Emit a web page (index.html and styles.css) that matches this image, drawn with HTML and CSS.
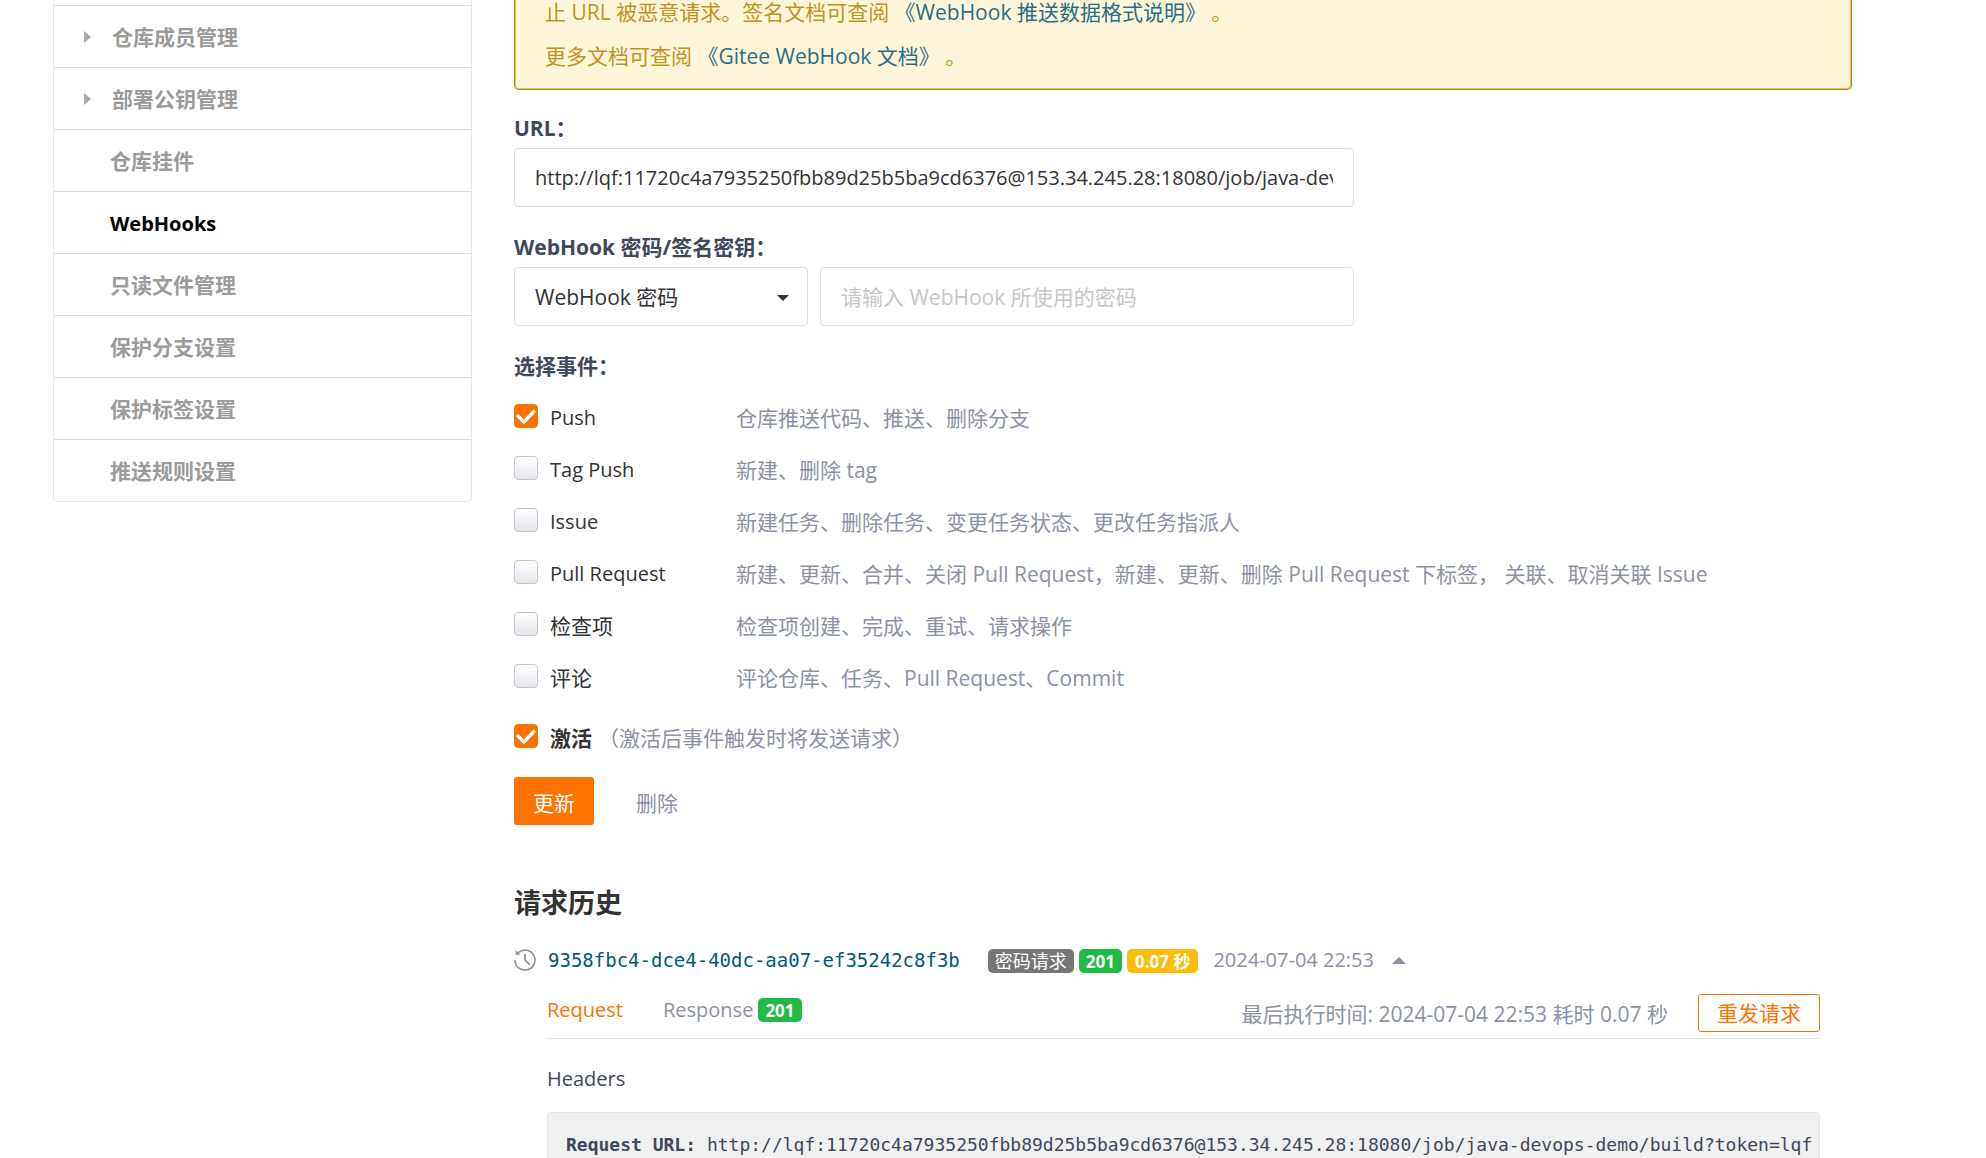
FILE: index.html
```html
<!DOCTYPE html>
<html lang="zh-CN">
<head>
    <meta charset="UTF-8">
    <meta name="viewport" content="width=device-width, initial-scale=1.0">
    <title>WebHooks</title>
    <link rel="stylesheet" href="styles.css">
</head>
<body>
    <div class="container">
        <!-- 左侧菜单 -->
        <nav class="sidebar">
            <ul class="menu">
                <li><a href="#" class="has-arrow">仓库成员管理</a></li>
                <li><a href="#" class="has-arrow">部署公钥管理</a></li>
                <li><a href="#">仓库挂件</a></li>
                <li><a href="#" class="active">WebHooks</a></li>
                <li><a href="#">只读文件管理</a></li>
                <li><a href="#">保护分支设置</a></li>
                <li><a href="#">保护标签设置</a></li>
                <li><a href="#">推送规则设置</a></li>
            </ul>
        </nav>

        <main class="content">
            <div class="warning">
                <p>止 URL 被恶意请求。签名文档可查阅 <a href="#">《WebHook 推送数据格式说明》</a> 。</p>
                <p>更多文档可查阅 <a href="#">《Gitee WebHook 文档》</a> 。</p>
            </div>

            <form class="hook-form">
                <div class="field">
                    <label class="title" for="url">URL：</label>
                    <input type="text" class="text-input url-input" id="url" value="http://lqf:11720c4a7935250fbb89d25b5ba9cd6376@153.34.245.28:18080/job/java-devops-demo/build?token=lqf">
                </div>

                <div class="field">
                    <label class="title" for="password">WebHook 密码/签名密钥：</label>
                    <div class="inline-fields">
                        <div class="select-box">
                            <select class="text-input" aria-label="密码类型">
                                <option>WebHook 密码</option>
                                <option>签名密钥</option>
                            </select>
                        </div>
                        <input type="text" class="text-input" id="password" placeholder="请输入 WebHook 所使用的密码">
                    </div>
                </div>

                <!-- 事件列表 -->
                <fieldset class="events">
                    <legend class="title">选择事件：</legend>
                    <div class="event">
                        <input type="checkbox" id="push" checked>
                        <label for="push">Push</label>
                        <span class="desc">仓库推送代码、推送、删除分支</span>
                    </div>
                    <div class="event">
                        <input type="checkbox" id="tag">
                        <label for="tag">Tag Push</label>
                        <span class="desc">新建、删除 tag</span>
                    </div>
                    <div class="event">
                        <input type="checkbox" id="issue">
                        <label for="issue">Issue</label>
                        <span class="desc">新建任务、删除任务、变更任务状态、更改任务指派人</span>
                    </div>
                    <div class="event">
                        <input type="checkbox" id="pr">
                        <label for="pr">Pull Request</label>
                        <span class="desc">新建、更新、合并、关闭 Pull Request，新建、更新、删除 Pull Request 下标签， 关联、取消关联 Issue</span>
                    </div>
                    <div class="event">
                        <input type="checkbox" id="check">
                        <label for="check" class="zh">检查项</label>
                        <span class="desc">检查项创建、完成、重试、请求操作</span>
                    </div>
                    <div class="event">
                        <input type="checkbox" id="comment">
                        <label for="comment" class="zh">评论</label>
                        <span class="desc">评论仓库、任务、Pull Request、Commit</span>
                    </div>
                </fieldset>

                <div class="event activate">
                    <input type="checkbox" id="active" checked>
                    <label for="active" class="zh">激活</label>
                    <span class="desc">（激活后事件触发时将发送请求）</span>
                </div>

                <div class="actions">
                    <button type="submit" class="update-btn">更新</button>
                    <button type="button" class="delete-btn">删除</button>
                </div>
            </form>

            <!-- 请求历史 -->
            <section class="history">
                <h2>请求历史</h2>
                <div class="record">
                    <svg class="history-icon" width="22" height="22" viewBox="1 1 22 22" fill="none" stroke="#8c92a4">
                        <path d="M5.2 4.8A10 10 0 1 1 2 12" stroke-width="1.6"/>
                        <path d="M12 6v6l4.6 4.6" stroke-width="1.8"/>
                        <path d="M2.6 2.2v4.6h4.8z" fill="#8c92a4" stroke="none"/>
                    </svg>
                    <a href="#" class="uuid">9358fbc4-dce4-40dc-aa07-ef35242c8f3b</a>
                    <div class="badges">
                        <span class="badge gray">密码请求</span>
                        <span class="badge green">201</span>
                        <span class="badge yellow">0.07 秒</span>
                    </div>
                    <span class="time">2024-07-04 22:53</span>
                    <span class="caret-up"></span>
                </div>

                <div class="detail">
                    <div class="tabs">
                        <a href="#" class="tab current">Request</a>
                        <a href="#" class="tab">Response <span class="badge green">201</span></a>
                        <span class="last-run">最后执行时间: 2024-07-04 22:53 耗时 0.07 秒</span>
                        <button type="button" class="resend-btn">重发请求</button>
                    </div>
                    <h3>Headers</h3>
                    <pre><strong>Request URL:</strong> http://lqf:11720c4a7935250fbb89d25b5ba9cd6376@153.34.245.28:18080/job/java-devops-demo/build?token=lqf</pre>
                </div>
            </section>
        </main>
    </div>
</body>
</html>
```

FILE: styles.css
```css
* {
    box-sizing: border-box;
}

body {
    margin: 0;
    background-color: #fff;
    color: #333;
    font-family: "Open Sans", "Noto Sans CJK SC", sans-serif;
    font-size: 20px;
    line-height: 28px;
}

a {
    text-decoration: none;
}

p, h2, h3, ul, pre {
    margin: 0;
}

input, select, button {
    font: inherit;
    color: inherit;
}

.container {
    display: flex;
    align-items: flex-start;
    gap: 42px;
    padding: 0 134px 0 53px;
}

/* 左侧菜单 */
.sidebar {
    flex: 0 0 419px;
    padding-top: 5px;
    border: 1px solid #e3e9ed;
    border-top: none;
    border-radius: 0 0 5px 5px;
}

.menu {
    padding: 0;
    list-style: none;
}

.menu li {
    border-top: 1px solid #dedede;
}

.menu a {
    display: flex;
    align-items: center;
    height: 61px;
    padding-left: 56px;
    color: #9b9b9b;
    font-size: 21px;
    font-weight: bold;
}

.menu .active {
    padding-top: 3px;
    color: #000;
    font-size: 20px;
}

.menu .has-arrow {
    padding-left: 30px;
}

.has-arrow::before {
    content: "";
    margin-right: 21px;
    border-left: 7px solid #aaa;
    border-top: 6px solid transparent;
    border-bottom: 6px solid transparent;
}

.content {
    flex: 1;
    min-width: 0;
}

.warning {
    padding: 0 30px 21px;
    border: 1px solid #b58105;
    border-top: none;
    border-radius: 0 0 5px 5px;
    box-shadow: inset -1px -1px 0 #d9c26c, inset 1px 0 0 #d9c26c;
    background-color: #fff6d9;
    color: #c1921f;
    font-size: 21px;
    line-height: 24px;
}

.warning p + p {
    margin-top: 20px;
}

.warning a {
    color: #276f86;
}

/* 表单 */
.hook-form {
    padding-top: 24px;
}

.field {
    max-width: 840px;
    margin-bottom: 26px;
}

.title {
    display: block;
    padding: 0;
    margin-bottom: 6px;
    color: #40485b;
    font-size: 21px;
    font-weight: bold;
}

.text-input {
    display: block;
    width: 100%;
    height: 59px;
    padding: 0 20px;
    border: 1px solid #dcdfe6;
    border-radius: 4px;
    background-color: #fff;
    font-size: 21px;
    appearance: none;
}

.url-input {
    font-size: 20px;
}

.text-input::placeholder {
    color: #c7c7c7;
}

.inline-fields {
    display: flex;
    gap: 12px;
}

.select-box {
    position: relative;
    flex: 0 0 294px;
}

.select-box::after {
    content: "";
    position: absolute;
    right: 19px;
    top: 28px;
    border-top: 6px solid #333;
    border-left: 6px solid transparent;
    border-right: 6px solid transparent;
    pointer-events: none;
}

.events {
    margin: 0;
    padding: 0;
    border: none;
}

.events .title {
    margin-bottom: 12px;
}

.event {
    display: flex;
    align-items: center;
    height: 52px;
}

.event input {
    display: flex;
    align-items: center;
    justify-content: center;
    width: 24px;
    height: 24px;
    margin: 0 12px 4px 0;
    border: 1px solid #c3c6cc;
    border-radius: 4px;
    background: linear-gradient(#fff, #e4e6ec);
    appearance: none;
}

.event input:checked {
    border-color: #fe7300;
    background: #fe7300;
}

.event input:checked::before {
    content: "";
    width: 14px;
    height: 8px;
    margin-bottom: 4px;
    border-left: 4px solid #fff;
    border-bottom: 4px solid #fff;
    border-radius: 1px;
    transform: rotate(-45deg);
}

.event label {
    width: 186px;
}

.event .zh {
    font-size: 21px;
}

.desc {
    color: #8c92a4;
    font-size: 21px;
}

.activate {
    margin-top: 8px;
}

.activate label {
    width: auto;
    margin-right: 6px;
    font-weight: bold;
}

.actions {
    display: flex;
    gap: 23px;
    margin-top: 13px;
}

.actions button {
    width: 80px;
    height: 48px;
    padding: 3px 0 0;
    border: none;
    border-radius: 3px;
    font-size: 21px;
    cursor: pointer;
}

.update-btn {
    background-color: #fe7300;
    color: #fff;
}

.delete-btn {
    background-color: transparent;
    color: #8c92a4;
}

/* 请求历史 */
.history {
    padding-top: 60px;
}

.history h2 {
    font-size: 27px;
    line-height: 36px;
}

.record {
    display: flex;
    align-items: center;
    height: 36px;
    margin-top: 21px;
    color: #8c92a4;
}

.history-icon {
    margin-right: 12px;
}

.uuid {
    color: #005980;
    font-family: "DejaVu Sans Mono", monospace;
    font-size: 19px;
}

.badges {
    display: flex;
    gap: 5px;
    margin: 2px 15px 0 28px;
}

.badge {
    height: 24px;
    padding: 0 7px;
    border-radius: 5px;
    color: #fff;
    font-size: 17px;
    font-weight: bold;
    line-height: 25px;
}

.gray {
    background-color: #767676;
    font-size: 18px;
    font-weight: normal;
}

.green {
    background-color: #21ba45;
}

.yellow {
    padding: 0 8px;
    background-color: #fbbd08;
}

.caret-up {
    margin-left: 18px;
    border-bottom: 7px solid #8c92a4;
    border-left: 7px solid transparent;
    border-right: 7px solid transparent;
}

.detail {
    margin: 16px 32px 0 33px;
}

.tabs {
    display: flex;
    align-items: flex-start;
    padding-bottom: 6px;
    border-bottom: 1px solid #e3e4e6;
}

.tab {
    display: flex;
    gap: 5px;
    margin-right: 40px;
    padding-top: 4px;
    color: #8c92a4;
    line-height: 24px;
}

.current {
    color: #fe7300;
}

.last-run {
    margin-left: auto;
    padding-top: 6px;
    color: #8c92a4;
    font-size: 21px;
}

.resend-btn {
    width: 122px;
    height: 38px;
    margin-left: 30px;
    padding: 0;
    border: 1px solid #fe7300;
    border-radius: 3px;
    background-color: #fff;
    color: #fe7300;
    font-size: 21px;
    line-height: 36px;
    cursor: pointer;
}

.detail h3 {
    margin: 26px 0 19px;
    color: #40485b;
    font-size: 20px;
    font-weight: normal;
}

.detail pre {
    overflow: hidden;
    padding: 18px 8px 18px 18px;
    border: 1px solid #e3e4e6;
    border-radius: 4px;
    background-color: #f0f0f0;
    color: #40485b;
    font-family: "DejaVu Sans Mono", monospace;
    font-size: 18px;
}
```
